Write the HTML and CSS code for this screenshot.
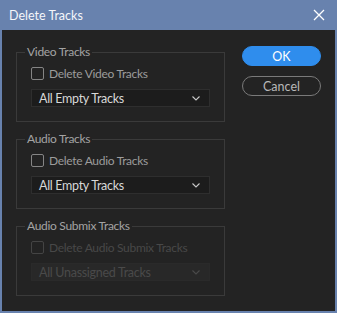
FILE: index.html
```html
<!DOCTYPE html>
<html>
<head>
<meta charset="utf-8">
<link rel="stylesheet" href="styles.css">
</head>
<body>
<div class="window">
  <div class="titlebar">
    <span class="title">Delete Tracks</span>
    <svg class="close" width="12" height="12" viewBox="0 0 12 12"><path d="M1 1 L11 11 M11 1 L1 11" stroke="#ffffff" stroke-width="1.3" fill="none"/></svg>
  </div>
  <div class="content">
    <div class="groups">
      <fieldset class="group">
        <legend>Video Tracks</legend>
        <div class="inner">
          <label class="check"><span class="box"></span><span>Delete Video Tracks</span></label>
          <div class="select"><span>All Empty Tracks</span><svg width="8" height="5" viewBox="0 0 8 5"><path d="M0.5 0.5 L4 4 L7.5 0.5" stroke="#c8c8c8" stroke-width="1.1" fill="none"/></svg></div>
        </div>
      </fieldset>
      <fieldset class="group">
        <legend>Audio Tracks</legend>
        <div class="inner">
          <label class="check"><span class="box"></span><span>Delete Audio Tracks</span></label>
          <div class="select"><span>All Empty Tracks</span><svg width="8" height="5" viewBox="0 0 8 5"><path d="M0.5 0.5 L4 4 L7.5 0.5" stroke="#c8c8c8" stroke-width="1.1" fill="none"/></svg></div>
        </div>
      </fieldset>
      <fieldset class="group disabled">
        <legend>Audio Submix Tracks</legend>
        <div class="inner">
          <label class="check"><span class="box"></span><span>Delete Audio Submix Tracks</span></label>
          <div class="select"><span>All Unassigned Tracks</span><svg width="8" height="5" viewBox="0 0 8 5"><path d="M0.5 0.5 L4 4 L7.5 0.5" stroke="#4a4a4a" stroke-width="1.1" fill="none"/></svg></div>
        </div>
      </fieldset>
    </div>
    <div class="buttons">
      <button class="btn ok">OK</button>
      <button class="btn cancel">Cancel</button>
    </div>
  </div>
</div>
</body>
</html>
```
FILE: styles.css
```css
html, body {
  margin: 0;
  padding: 0;
  background: #232323;
}
.window {
  width: 337px;
  height: 313px;
  background: #6882ae;
  display: flex;
  flex-direction: column;
  font-family: "Lato", "Open Sans", sans-serif;
}
.titlebar {
  height: 30px;
  display: flex;
  align-items: center;
  justify-content: space-between;
  padding: 0 12px 0 9px;
  box-sizing: border-box;
}
.title {
  color: #f4f6fa;
  font-family: "Lato", "Open Sans", sans-serif;
  font-size: 12.5px;
}
.close {
  display: block;
}
.content {
  margin: 0 2px 2px 2px;
  flex: 1;
  background: #232323;
  display: flex;
  padding: 15px 14px 0 14px;
  gap: 17px;
}
.groups {
  display: flex;
  flex-direction: column;
  gap: 10px;
  width: 210px;
}
.group {
  margin: 0;
  padding: 0;
  border: 1px solid #3a3a3a;
  min-width: 0;
}
.group legend {
  margin-left: 8px;
  padding: 0 2px;
  font-size: 12px;
  letter-spacing: -0.3px;
  line-height: 14px;
  color: #a3a3a3;
}
.inner {
  padding: 6px 14px 14px 14px;
  display: flex;
  flex-direction: column;
  gap: 8px;
}
.check {
  display: flex;
  align-items: center;
  gap: 5px;
  height: 16px;
  font-size: 12px;
  letter-spacing: -0.3px;
  color: #9c9c9c;
}
.box {
  width: 11px;
  height: 11px;
  border: 1px solid #858585;
  border-radius: 2px;
}
.select {
  height: 18px;
  box-sizing: border-box;
  border: 1px solid #2e2e2e;
  background: #1c1c1c;
  display: flex;
  align-items: center;
  justify-content: space-between;
  padding: 0 9px 0 7px;
  font-size: 12.5px;
  letter-spacing: -0.3px;
  color: #d8d8d8;
}
.select svg {
  display: block;
}
.disabled .check {
  color: #484848;
}
.disabled .box {
  border-color: #444444;
}
.disabled .select {
  background: #282828;
  border-color: #2a2a2a;
  color: #4a4a4a;
}
.buttons {
  display: flex;
  flex-direction: column;
  gap: 10px;
  padding-top: 1px;
}
.btn {
  width: 79px;
  height: 20px;
  border-radius: 10px;
  font-family: "Lato", "Open Sans", sans-serif;
  font-size: 12.5px;
  padding: 0;
  box-sizing: border-box;
}
.ok {
  background: #2f8ded;
  border: 1px solid #2f8ded;
  color: #ffffff;
}
.cancel {
  background: transparent;
  border: 1px solid #7a7a7a;
  color: #b8b8b8;
}
```
